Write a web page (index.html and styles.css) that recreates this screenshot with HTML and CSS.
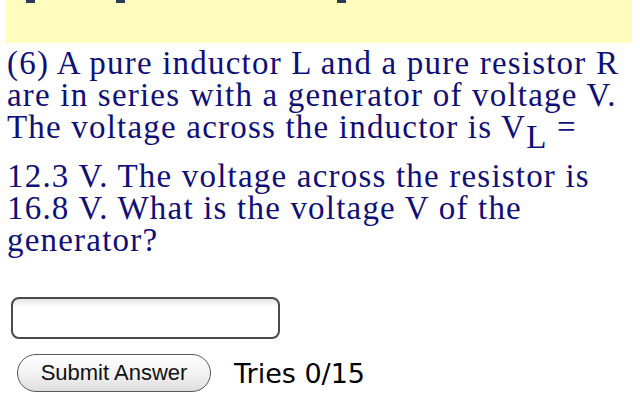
FILE: index.html
```html
<!DOCTYPE html>
<html>
<head>
<meta charset="utf-8">
<link rel="stylesheet" href="styles.css">
</head>
<body>
<div class="banner">
  <span class="mark m1"></span>
  <span class="mark m2"></span>
  <span class="mark m3"></span>
</div>
<p class="question">(6) A pure inductor L and a pure resistor R<br>are in series with a generator of voltage V.<br>The voltage across the inductor is V<sub>L</sub> =<br>12.3 V. The voltage across the resistor is<br>16.8 V. What is the voltage V of the<br>generator?</p>
<div class="answer">
  <div class="field"></div>
</div>
<div class="actions">
  <button class="submit">Submit Answer</button>
  <span class="tries">Tries 0/15</span>
</div>
</body>
</html>
```
FILE: styles.css
```css
html, body {
  margin: 0;
  padding: 0;
  background: #ffffff;
}
body {
  width: 640px;
  height: 406px;
  overflow: hidden;
}
.banner {
  position: relative;
  margin: 0 8px 0 6px;
  height: 43px;
  background: #fffcbd;
}
.mark {
  position: absolute;
  top: 0;
  height: 3px;
  width: 9px;
  background: #2a3a5a;
}
.m1 { left: 20px; }
.m2 { left: 110px; }
.m3 { left: 331px; }
.question {
  margin: 4px 0 0 0;
  padding: 0 0 0 7px;
  font-family: "Liberation Serif", "Times New Roman", serif;
  font-size: 33px;
  letter-spacing: 1.2px;
  line-height: 32px;
  color: #0f0f78;
  white-space: nowrap;
}
.question sub {
  display: inline-block;
  font-size: 1em;
  line-height: 32px;
  vertical-align: -10px;
  padding-bottom: 7px;
}
.answer {
  padding: 41px 0 0 11px;
}
.field {
  width: 265px;
  height: 38px;
  border: 2px solid #4a4a4a;
  border-radius: 8px;
  background: linear-gradient(#e4e4e4, #ffffff 8px);
}
.actions {
  display: flex;
  align-items: center;
  gap: 23px;
  padding: 15px 0 0 17px;
}
.submit {
  width: 194px;
  height: 38px;
  border: 1.5px solid #5a5a5a;
  border-radius: 19px;
  background: linear-gradient(#ffffff, #f2f2f2 50%, #dedede);
  font-family: "Liberation Sans", Arial, sans-serif;
  font-size: 22px;
  color: #111;
  padding: 0;
}
.tries {
  font-family: "DejaVu Sans", Verdana, sans-serif;
  font-size: 27px;
  color: #000;
}
```
